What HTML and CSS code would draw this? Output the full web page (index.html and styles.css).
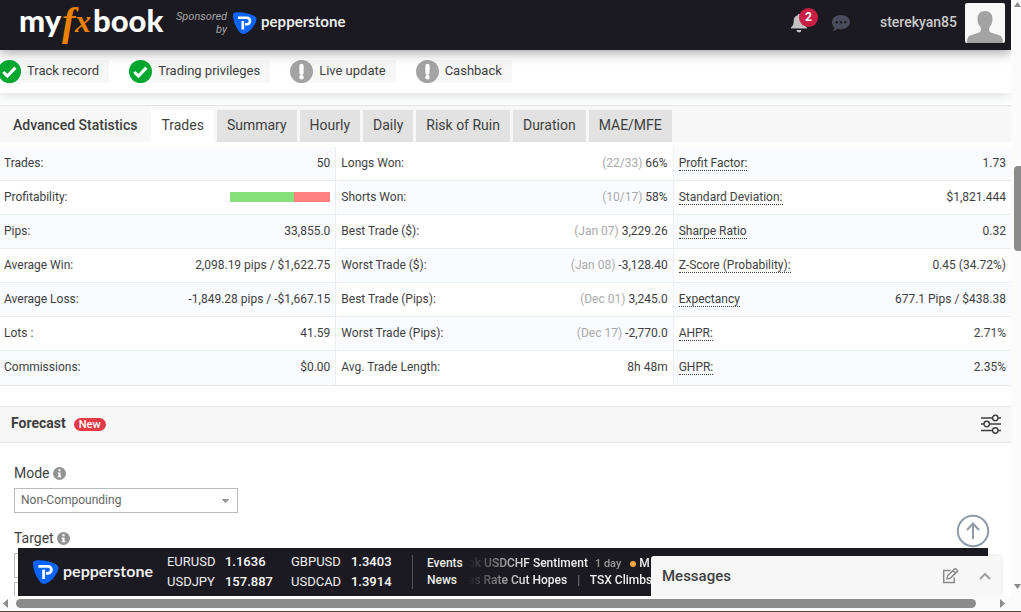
FILE: index.html
```
<!DOCTYPE html>
<html lang="en">
<head>
    <meta charset="UTF-8">
    <meta name="viewport" content="width=device-width, initial-scale=1.0">
    <title>Myfxbook</title>
    <link rel="stylesheet" href="styles.css">
</head>
<body>
    <svg class="defs" width="0" height="0">
        <symbol id="pepper-mark" viewBox="0 0 24 22">
            <path d="M2 0.6C7-0.4 15 0.8 21 3.8c2.2 1.1 2.9 3 2.2 5.2C21.500 14.500 17 19.500 12.500 21.500c-2 .8-4.500.4-5.800-1.300C2.500 15 0 8.500 0 2.800 0 1.500.8.8 2 .6z" fill="#0a64ff"/>
            <path d="M5 5.800h8.800a3.200 3.200 0 0 1 0 6.400H12M9.800 9v8.500" fill="none" stroke="#fff" stroke-width="2.600"/>
        </symbol>
        <symbol id="check" viewBox="0 0 24 24">
            <circle cx="12" cy="12" r="12" fill="#04a82f"/>
            <path d="M5.500 12.500l4.300 4.200 8.400-8.800" fill="none" stroke="#fff" stroke-width="3.200"/>
        </symbol>
        <symbol id="bang" viewBox="0 0 24 24">
            <circle cx="12" cy="12" r="12" fill="#a3a3a3"/>
            <path d="M12 6v7.500" stroke="#fff" stroke-width="4.400" stroke-linecap="round"/>
            <circle cx="12" cy="18" r="2.300" fill="#fff"/>
        </symbol>
        <symbol id="info" viewBox="0 0 12 12">
            <circle cx="6" cy="6" r="6" fill="#919191"/>
            <path d="M5 2h2v2H5zM4.300 5H7v3.500h.8v1H4.300v-1H5V6h-.7z" fill="#fff"/>
        </symbol>
    </svg>

    <div class="window">
        <div class="page">
            <header class="header">
                <a href="#" class="logo" aria-label="myfxbook">
                    <svg width="148" height="46" viewBox="0 0 148 46">
                        <text x="1" y="32" class="logo-word">my</text>
                        <text x="44" y="35" class="logo-f">f</text>
                        <text x="57" y="32" class="logo-x">x</text>
                        <text x="75" y="32" class="logo-word">book</text>
                    </svg>
                </a>
                <p class="sponsored">Sponsored<br>by</p>
                <a href="#" class="pepper">
                    <svg width="24" height="22"><use href="#pepper-mark"/></svg>
                    <span>pepperstone</span>
                </a>
                <button class="icon-btn bell" aria-label="Notifications">
                    <svg width="18" height="20" viewBox="0 0 18 20" fill="#c2c2c2">
                        <path d="M9 1c.8 0 1.300.6 1.300 1.300 2.600.6 4 2.700 4 5.200 0 4.500 1.200 5.600 2.700 7v1H1v-1c1.500-1.400 2.700-2.500 2.700-7 0-2.500 1.400-4.600 4-5.200C7.700 1.600 8.200 1 9 1zM6.500 17h5a2.500 2.500 0 0 1-5 0z"/>
                    </svg>
                    <span class="count">2</span>
                </button>
                <button class="icon-btn" aria-label="Messages">
                    <svg width="18" height="17" viewBox="0 0 18 17">
                        <path d="M9 0c5 0 9 3 9 7s-4 7.200-9 7.200c-1.200 0-2.300-.2-3.300-.5C4.300 15 2.500 15.900.5 15.900c1-1 1.700-2.200 1.800-3.400C.8 11.100 0 9.200 0 7.200 0 3 4 0 9 0z" fill="#4a4b5c"/>
                        <circle cx="4.800" cy="7.200" r="1.200" fill="#1b1a20"/>
                        <circle cx="9" cy="7.200" r="1.200" fill="#1b1a20"/>
                        <circle cx="13.200" cy="7.200" r="1.200" fill="#1b1a20"/>
                    </svg>
                </button>
                <a href="#" class="user">
                    <span>sterekyan85</span>
                    <svg class="avatar" width="40" height="40" viewBox="0 0 40 40">
                        <rect width="40" height="40" rx="2" fill="#f8f8f8"/>
                        <path d="M20 8c4.800 0 7.500 3 7.500 8 0 4-1.300 6.500-3.300 8.300v3c0 1.400 1 2 3 2.700l7 2.300c2.600.9 3.600 2.600 3.800 7.700H2c.2-5.100 1.200-6.800 3.800-7.700l7-2.300c2-.7 3-1.300 3-2.700v-3c-2-1.800-3.300-4.300-3.300-8.300 0-5 2.700-8 7.500-8z" fill="#a3a3a3"/>
                    </svg>
                </a>
            </header>

            <ul class="badges">
                <li><svg width="23" height="23"><use href="#check"/></svg><span>Track record</span></li>
                <li><svg width="23" height="23"><use href="#check"/></svg><span>Trading privileges</span></li>
                <li><svg width="23" height="23"><use href="#bang"/></svg><span>Live update</span></li>
                <li><svg width="23" height="23"><use href="#bang"/></svg><span>Cashback</span></li>
            </ul>

            <section class="stats">
                <div class="tabs">
                    <h2>Advanced Statistics</h2>
                    <button class="tab active">Trades</button>
                    <button class="tab">Summary</button>
                    <button class="tab">Hourly</button>
                    <button class="tab">Daily</button>
                    <button class="tab">Risk of Ruin</button>
                    <button class="tab">Duration</button>
                    <button class="tab">MAE/MFE</button>
                </div>

                <div class="tables">
                    <table>
                        <tr><th>Trades:</th><td>50</td></tr>
                        <tr><th>Profitability:</th><td><div class="profit"><div class="won" style="width: 64%"></div></div></td></tr>
                        <tr><th>Pips:</th><td>33,855.0</td></tr>
                        <tr><th>Average Win:</th><td>2,098.19 pips / $1,622.75</td></tr>
                        <tr><th>Average Loss:</th><td>-1,849.28 pips / -$1,667.15</td></tr>
                        <tr><th>Lots :</th><td>41.59</td></tr>
                        <tr><th>Commissions:</th><td>$0.00</td></tr>
                    </table>
                    <table class="alt">
                        <tr><th>Longs Won:</th><td><span>(22/33)</span> 66%</td></tr>
                        <tr><th>Shorts Won:</th><td><span>(10/17)</span> 58%</td></tr>
                        <tr><th>Best Trade ($):</th><td><span>(Jan 07)</span> 3,229.26</td></tr>
                        <tr><th>Worst Trade ($):</th><td><span>(Jan 08)</span> -3,128.40</td></tr>
                        <tr><th>Best Trade (Pips):</th><td><span>(Dec 01)</span> 3,245.0</td></tr>
                        <tr><th>Worst Trade (Pips):</th><td><span>(Dec 17)</span> -2,770.0</td></tr>
                        <tr><th>Avg. Trade Length:</th><td>8h 48m</td></tr>
                    </table>
                    <table>
                        <tr><th><span class="hint">Profit Factor:</span></th><td>1.73</td></tr>
                        <tr><th><span class="hint">Standard Deviation:</span></th><td>$1,821.444</td></tr>
                        <tr><th><span class="hint">Sharpe Ratio</span></th><td>0.32</td></tr>
                        <tr><th><span class="hint">Z-Score (Probability):</span></th><td>0.45 (34.72%)</td></tr>
                        <tr><th><span class="hint">Expectancy</span></th><td>677.1 Pips / $438.38</td></tr>
                        <tr><th><span class="hint">AHPR:</span></th><td>2.71%</td></tr>
                        <tr><th><span class="hint">GHPR:</span></th><td>2.35%</td></tr>
                    </table>
                </div>
            </section>

            <section class="forecast">
                <div class="forecast-head">
                    <h2>Forecast</h2>
                    <span class="new">New</span>
                    <button class="icon-btn filters" aria-label="Forecast settings">
                        <svg width="20" height="20" viewBox="0 0 20 20" fill="none" stroke="#3f3f3f" stroke-width="1.400">
                            <path d="M0 4h11.500M17 4h3M0 10h3M8.500 10H20M0 16.500h11.500M17 16.500h3"/>
                            <circle cx="14.300" cy="4" r="2.700"/>
                            <circle cx="5.700" cy="10" r="2.700"/>
                            <circle cx="14.300" cy="16.500" r="2.700"/>
                        </svg>
                    </button>
                </div>
                <form class="forecast-form">
                    <div class="field">
                        <label for="mode">Mode <svg width="13" height="13"><use href="#info"/></svg></label>
                        <select id="mode">
                            <option>Non-Compounding</option>
                        </select>
                    </div>
                    <div class="field">
                        <label for="target">Target <svg width="13" height="13"><use href="#info"/></svg></label>
                        <input type="text" id="target">
                        <input type="text" aria-label="Target value">
                    </div>
                </form>
            </section>

            <footer class="ticker">
                <a href="#" class="pepper">
                    <svg width="26" height="24"><use href="#pepper-mark"/></svg>
                    <span>pepperstone</span>
                </a>
                <div class="quotes">
                    <span>EURUSD</span><b>1.1636</b><span>GBPUSD</span><b>1.3403</b>
                    <span>USDJPY</span><b>157.887</b><span>USDCAD</span><b>1.3914</b>
                </div>
                <div class="feeds">
                    <a href="#">Events</a>
                    <p class="feed">ok USDCHF Sentiment <small>1 day</small> <i class="dot"></i> M</p>
                    <a href="#">News</a>
                    <p class="feed">es Rate Cut Hopes <i class="bar">|</i> TSX Climbs</p>
                </div>
            </footer>

            <a href="#" class="to-top" aria-label="Back to top">
                <svg width="34" height="34" viewBox="0 0 34 34" fill="none" stroke="#8f9ba8" stroke-width="2">
                    <circle cx="17" cy="17" r="15.200" fill="#fff"/>
                    <path d="M17 25V10M11 16l6-6.500 6 6.500"/>
                </svg>
            </a>

            <div class="messages">
                <h3>Messages</h3>
                <button class="icon-btn" aria-label="New message">
                    <svg width="18" height="16" viewBox="0 0 18 16" fill="none" stroke="#8a8a8a" stroke-width="1.500">
                        <path d="M9.500 2.500H2.700v12h10.600V9.500"/>
                        <path d="M6 10.800l.6-3L13.500 1c.5-.4 1-.4 1.400 0l1.300 1.300c.4.4.4.9 0 1.300L9.200 10.400zM12 2.500l2.700 2.700"/>
                    </svg>
                </button>
                <button class="icon-btn" aria-label="Expand">
                    <svg width="12" height="8" viewBox="0 0 12 8" fill="none" stroke="#a0a0a0" stroke-width="2">
                        <path d="M1 7l5-5 5 5"/>
                    </svg>
                </button>
            </div>
        </div>

        <div class="scroll-y">
            <svg width="7" height="5" viewBox="0 0 7 5"><path d="M0 5L3.500 0 7 5z" fill="#8b8b8b"/></svg>
            <div class="thumb"></div>
            <svg width="7" height="5" viewBox="0 0 7 5"><path d="M0 0h7L3.500 5z" fill="#8b8b8b"/></svg>
        </div>
        <div class="scroll-x">
            <svg width="5" height="9" viewBox="0 0 5 9"><path d="M5 0v9L0 4.500z" fill="#8b8b8b"/></svg>
            <div class="thumb"></div>
            <svg width="5" height="9" viewBox="0 0 5 9"><path d="M0 0v9l5-4.500z" fill="#8b8b8b"/></svg>
        </div>
    </div>
</body>
</html>
```
FILE: styles.css
```
* {
    margin: 0;
    padding: 0;
    box-sizing: border-box;
}

body {
    font-family: Roboto, "Liberation Sans", sans-serif;
    font-size: 12px;
    color: #3f3f3f;
    background: #fff;
    overflow: hidden;
}

a {
    color: inherit;
    text-decoration: none;
}

button {
    font-family: inherit;
    border: none;
    background: none;
    cursor: pointer;
}

svg {
    display: block;
    flex-shrink: 0;
}

.defs {
    position: absolute;
}

.window {
    display: grid;
    grid-template-columns: 1fr 10px;
    grid-template-rows: 1fr 16px;
    height: 100vh;
}

.page {
    position: relative;
    overflow: hidden;
    min-width: 0;
}

/* header */
.header {
    position: relative;
    z-index: 1;
    display: flex;
    align-items: center;
    height: 50px;
    padding: 0 6px 4px 18px;
    background: #1b1a20;
    box-shadow: 0 2px 12px rgba(0, 0, 0, 0.4);
}

.logo svg {
    overflow: visible;
}

.logo-word {
    font-family: Lato, sans-serif;
    font-size: 31px;
    font-weight: 900;
    fill: #fff;
}

.logo-f,
.logo-x {
    font-family: "Liberation Serif", serif;
    font-style: italic;
    font-weight: 700;
    fill: #ec8000;
}

.logo-f {
    font-size: 40px;
}

.logo-x {
    font-size: 32px;
}

.sponsored {
    margin-left: 10px;
    font-size: 11px;
    line-height: 13px;
    font-style: italic;
    text-align: right;
    color: #a5a5a5;
}

.pepper {
    display: flex;
    align-items: center;
    gap: 4px;
    font-family: Lato, sans-serif;
    font-size: 15px;
    font-weight: 700;
    color: #eee;
}

.pepper span {
    padding-bottom: 4px;
}

.header .pepper {
    margin: 0 auto 0 6px;
}

.icon-btn {
    position: relative;
    margin-right: 24px;
}

.count {
    position: absolute;
    top: -5px;
    left: 9px;
    width: 19px;
    height: 19px;
    border-radius: 50%;
    background: #c91f47;
    color: #fff;
    font-size: 12px;
    font-weight: 700;
    line-height: 19px;
}

.user {
    display: flex;
    align-items: center;
    gap: 8px;
    margin-left: 6px;
    font-size: 14px;
    font-weight: 500;
    color: #c9c9c9;
}

.user span {
    padding-bottom: 2px;
}

/* account badges */
.badges {
    display: flex;
    gap: 20px;
    padding: 10px 0;
    list-style: none;
    margin-left: -2px;
    box-shadow: 0 2px 12px rgba(60, 80, 75, 0.2);
}

.badges li {
    display: flex;
    align-items: center;
    background: linear-gradient(90deg, transparent 12px, #f7f7f7 12px);
    font-size: 13px;
    line-height: 21px;
}

.badges span {
    padding: 0 10px 2px 6px;
}

/* statistics */
.tabs {
    display: flex;
    gap: 3px;
    margin-top: 12px;
    padding-top: 4px;
    border-top: 1px solid #e5e5e5;
    background: #f7f7f7;
}

.stats {
    position: relative;
}

h2 {
    font-size: 14px;
    font-weight: 500;
}

.tabs h2 {
    padding: 0 11px 2px 13px;
    line-height: 30px;
}

.tab {
    padding: 0 10px 2px;
    background: #e2e2e2;
    color: #3f3f3f;
    font-size: 14px;
    line-height: 30px;
}

.tab.active {
    background: #fff;
}

.tables {
    display: grid;
    grid-template-columns: 1fr 1fr 1fr;
    gap: 1px;
    margin-top: 5px;
    border-bottom: 1px solid #e5e5e5;
}

table {
    width: 100%;
    border-collapse: separate;
    border-spacing: 0;
    border-right: 1px solid #eaedf1;
}

table:last-child {
    border-right: none;
}

th,
td {
    height: 34px;
    padding: 0 5px 2px 4px;
    border-bottom: 1px solid #e8edf2;
    font-weight: 400;
    text-align: left;
    white-space: nowrap;
}

tr:last-child th,
tr:last-child td {
    border-bottom: none;
}

td {
    text-align: right;
}

td span {
    color: #aaa;
}

tr:nth-child(odd),
.alt tr:nth-child(even) {
    background: #fafbfe;
}

.alt tr:nth-child(odd) {
    background: #fff;
}

.hint {
    border-bottom: 1px dotted #3f3f3f;
}

.profit {
    width: 100px;
    height: 10px;
    margin-left: auto;
    background: #ff8080;
}

.won {
    height: 10px;
    background: #86e07b;
}

/* forecast */
.forecast {
    margin-top: 20px;
}

.forecast-head {
    display: flex;
    align-items: center;
    gap: 8px;
    height: 37px;
    padding: 0 10px 2px 11px;
    border-top: 1px solid #e5e5e5;
    border-bottom: 1px solid #e5e5e5;
    background: #f7f7f7;
}

.forecast-head h2 {
    padding-bottom: 2px;
    font-weight: 700;
}

.new {
    margin-top: 2px;
    padding: 0 5px;
    border-radius: 7px;
    background: #e63946;
    color: #fff;
    font-size: 11px;
    font-weight: 500;
    line-height: 13px;
}

.filters {
    margin: 0 0 0 auto;
}

.forecast-form {
    padding: 20px 14px 0;
}

.field {
    width: 224px;
    margin-bottom: 15px;
}

.field label {
    display: flex;
    align-items: center;
    gap: 3px;
    margin-bottom: 5px;
    font-size: 14px;
    line-height: 20px;
}

.field select,
.field input {
    display: block;
    width: 100%;
    height: 25px;
    margin-bottom: 4px;
    padding: 0 6px 2px;
    border: 1px solid #bbb;
    background: #fff;
    color: #666;
    font-family: inherit;
    font-size: 12px;
}

.field select {
    appearance: none;
    margin-bottom: 0;
    background: linear-gradient(to bottom right, #999 50%, transparent 50%) no-repeat right 7px center / 4px 4px,
        linear-gradient(to bottom left, #999 50%, transparent 50%) no-repeat right 11px center / 4px 4px;
}

/* bottom ticker */
.ticker {
    position: absolute;
    left: 18px;
    right: 23px;
    bottom: 0;
    display: flex;
    align-items: center;
    height: 48px;
    padding: 0 337px 0 15px;
    background: #1b1a20;
    color: #eee;
    white-space: nowrap;
}

.ticker .pepper {
    font-size: 16px;
}

.quotes {
    display: grid;
    grid-template-columns: 58px 66px 60px 46px;
    margin-left: 14px;
    font-size: 13px;
    line-height: 20px;
}

.quotes b {
    font-weight: 500;
    color: #fff;
}

.feeds {
    display: grid;
    grid-template-columns: 41px 1fr;
    flex: 1;
    min-width: 0;
    margin-left: 15px;
    padding-left: 14px;
    border-left: 1px solid #555;
    font-weight: 500;
    line-height: 17px;
}

.feed {
    overflow: hidden;
    mask-image: linear-gradient(90deg, transparent, #000 60px);
}

.feed small {
    margin: 0 4px;
    font-size: 11px;
    color: #999;
}

.dot {
    display: inline-block;
    width: 6px;
    height: 6px;
    margin-left: 2px;
    border-radius: 50%;
    background: #f5a83c;
}

.bar {
    margin: 0 7px;
    font-style: normal;
    color: #777;
}

.to-top {
    position: absolute;
    right: 21px;
    bottom: 48px;
}

.messages {
    position: absolute;
    right: 10px;
    bottom: 0;
    display: flex;
    align-items: center;
    width: 350px;
    height: 40px;
    padding-left: 11px;
    border-radius: 3px 3px 0 0;
    background: #f7f7f7;
    box-shadow: 0 0 4px rgba(0, 0, 0, 0.15);
}

.messages h3 {
    margin-right: auto;
    font-size: 15px;
    font-weight: 500;
}

.messages .icon-btn {
    margin-right: 20px;
}

.messages .icon-btn:last-child {
    margin-right: 10px;
}

/* scrollbars */
.scroll-y,
.scroll-x {
    display: flex;
    align-items: center;
    background: #fbfbfb;
}

.scroll-y {
    flex-direction: column;
    align-items: flex-end;
    padding: 2px 0 7px;
}

.scroll-y .thumb {
    width: 7px;
    height: 85px;
    margin: 159px 0 auto;
    border-radius: 4px 0 0 4px;
    background: #8b8b8b;
}

.scroll-x {
    grid-column: 1 / 3;
    gap: 8px;
    padding: 0 16px 0 3px;
    border-bottom: 1px solid #54483d;
}

.scroll-x .thumb {
    flex: 1;
    height: 9px;
    margin-right: 16px;
    border-radius: 5px;
    background: #8b8b8b;
}
```
